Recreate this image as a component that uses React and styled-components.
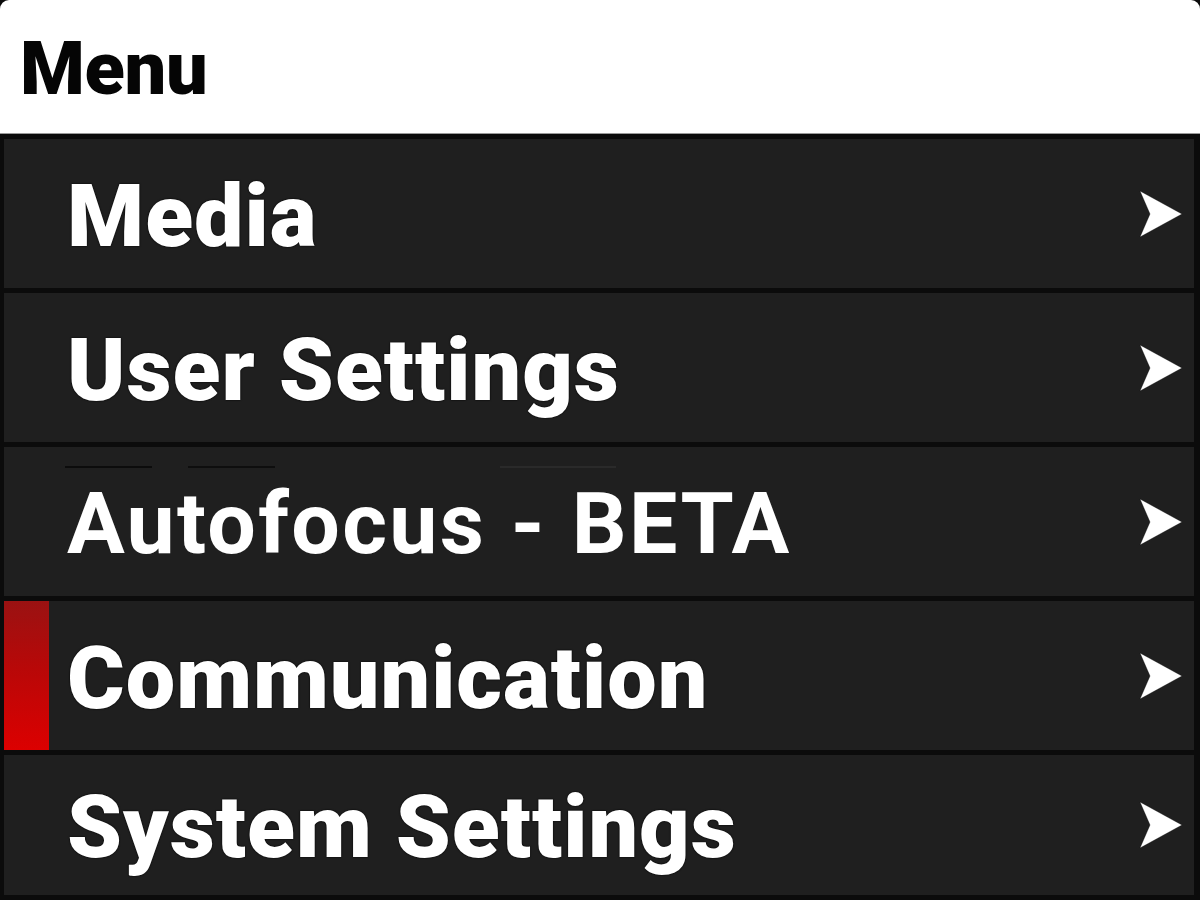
import React from "react";
import styled, { createGlobalStyle } from "styled-components";

const Global = createGlobalStyle`
  html, body { margin: 0; padding: 0; background: #0b0b0b; }
  body { width: 1200px; height: 900px; overflow: hidden; font-family: Roboto, "Liberation Sans", sans-serif; }
`;

const Screen = styled.div`
  width: 1200px;
  height: 900px;
  display: flex;
  flex-direction: column;
  background: #0b0b0b;
`;

const Header = styled.header`
  height: 133px;
  flex: none;
  background: #ffffff;
  border-radius: 9px 9px 0 0;
  border-bottom: 1px solid #9a9a9a;
  display: flex;
  align-items: center;
  padding-left: 20px;
`;

const Title = styled.h1`
  margin: 4px 0 0;
  font-family: Roboto, "Liberation Sans", sans-serif;
  font-weight: 900;
  font-size: 74px;
  line-height: 1;
  color: #050505;
  letter-spacing: -0.3px;
`;

const List = styled.div`
  flex: 1;
  display: flex;
  flex-direction: column;
  gap: 5px;
  padding: 5px 6px 6px 4px;
  background: #0b0b0b;
`;

const Row = styled.div`
  height: ${(p) => p.$h}px;
  flex: none;
  position: relative;
  display: flex;
  align-items: center;
  justify-content: space-between;
  background: #1f1f1f;
  padding: 0 11px 0 63px;
`;

const Marker = styled.div`
  position: absolute;
  left: 0;
  top: 0;
  bottom: 0;
  width: 45px;
  background: linear-gradient(180deg, #9a1212 0%, #b80808 45%, #dc0000 100%);
`;

const Label = styled.span`
  font-family: Roboto, "Liberation Sans", sans-serif;
  font-weight: ${(p) => (p.$crisp ? 700 : 900)};
  font-size: ${(p) => (p.$crisp ? 86 : 88)}px;
  line-height: 1;
  color: #ffffff;
  letter-spacing: ${(p) => (p.$crisp ? 2.3 : 1)}px;
  word-spacing: ${(p) => (p.$crisp ? 1 : 0)}px;
  margin-top: 4px;
  text-shadow: ${(p) =>
    p.$crisp ? "none" : "0 0 2px rgba(0,0,0,0.9), 0 0 1px rgba(0,0,0,0.9)"};
  white-space: nowrap;
`;

const Ghost = styled.div`
  position: absolute;
  top: 19px;
  left: 0;
  right: 0;
  height: 2px;
  pointer-events: none;
`;

const GhostLine = styled.span`
  position: absolute;
  top: 0;
  height: 2px;
  left: ${(p) => p.$x}px;
  width: ${(p) => p.$w}px;
  background: ${(p) => p.$c};
`;

const Arrow = () => (
  <svg width="44" height="48" viewBox="0 0 44 48" aria-hidden="true">
    <path d="M1 1 L43 24 L1 47 L11 24 Z" fill="#ffffff" stroke="#000" strokeOpacity="0.35" strokeWidth="1" strokeLinejoin="round" />
  </svg>
);

const items = [
  { label: "Media", h: 149 },
  { label: "User Settings", h: 149 },
  { label: "Autofocus - BETA", h: 149, crisp: true, ghost: true },
  { label: "Communication", h: 149, active: true },
  { label: "System Settings", h: 140 },
];

export default function App() {
  return (
    <>
      <Global />
      <Screen>
        <Header>
          <Title>Menu</Title>
        </Header>
        <List>
          {items.map((it) => (
            <Row key={it.label} $h={it.h}>
              {it.active && <Marker />}
              {it.ghost && (
                <Ghost>
                  <GhostLine $x={61} $w={87} $c="#0c0c0c" />
                  <GhostLine $x={184} $w={87} $c="#0e0e0e" />
                  <GhostLine $x={496} $w={116} $c="#2a2a2a" />
                </Ghost>
              )}
              <Label $crisp={it.crisp}>{it.label}</Label>
              <Arrow />
            </Row>
          ))}
        </List>
      </Screen>
    </>
  );
}
